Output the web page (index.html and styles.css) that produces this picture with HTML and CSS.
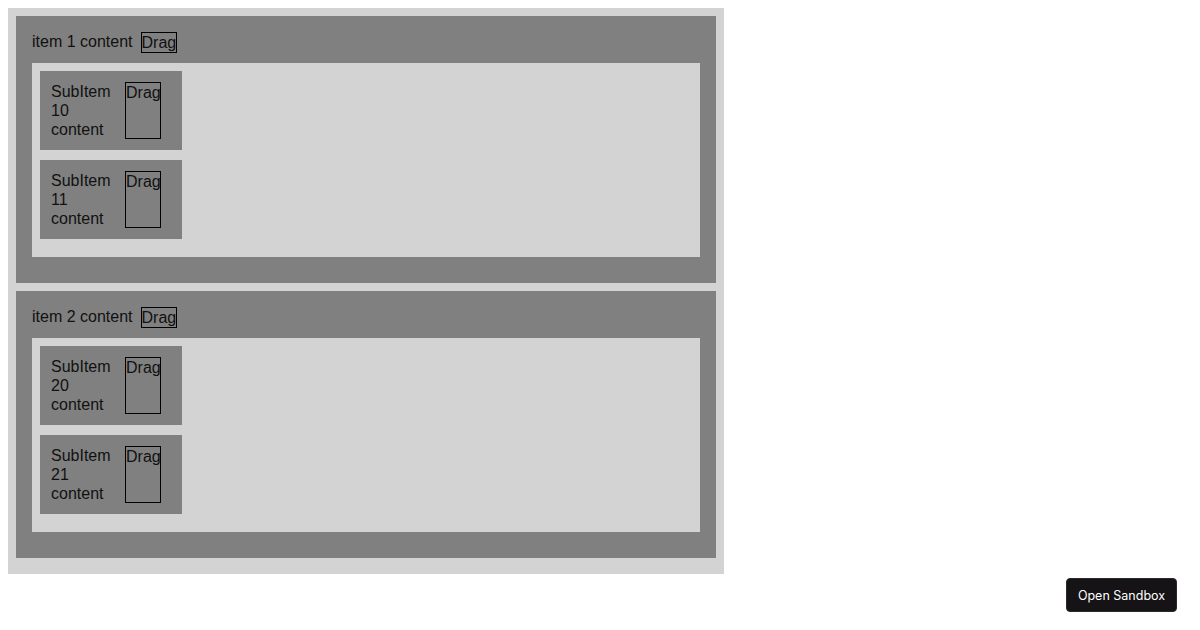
FILE: index.html
```html
<!DOCTYPE html>
<html>
<head>
<meta charset="utf-8">
<link rel="stylesheet" href="styles.css">
</head>
<body>
<div class="list">
  <div class="item">
    <div class="item-head"><span class="item-label">item 1 content</span><span class="handle">Drag</span></div>
    <div class="sublist">
      <div class="subitem"><div class="sub-text">SubItem 10 content</div><div class="handle sub-handle">Drag</div></div>
      <div class="subitem"><div class="sub-text">SubItem 11 content</div><div class="handle sub-handle">Drag</div></div>
    </div>
  </div>
  <div class="item">
    <div class="item-head"><span class="item-label">item 2 content</span><span class="handle">Drag</span></div>
    <div class="sublist">
      <div class="subitem"><div class="sub-text">SubItem 20 content</div><div class="handle sub-handle">Drag</div></div>
      <div class="subitem"><div class="sub-text">SubItem 21 content</div><div class="handle sub-handle">Drag</div></div>
    </div>
  </div>
</div>
<a class="sandbox-btn">Open Sandbox</a>
</body>
</html>
```
FILE: styles.css
```css
body {
  margin: 8px;
  font-family: "Liberation Sans", Arial, sans-serif;
  font-size: 16px;
  line-height: 19px;
  color: #111;
  background: #fff;
}
.list {
  width: 716px;
  box-sizing: border-box;
  background: #d3d3d3;
  padding: 8px;
  display: flow-root;
}
.item {
  background: #808080;
  padding: 16px;
  margin-bottom: 8px;
}
.item-head {
  display: flex;
  align-items: flex-start;
  margin-bottom: 10px;
}
.item-label {
  margin-right: 8px;
}
.handle {
  border: 1px solid #000;
  display: inline-block;
}
.sublist {
  background: #d3d3d3;
  padding: 8px;
  margin-bottom: 10px;
}
.subitem {
  background: #808080;
  width: 142px;
  box-sizing: border-box;
  padding: 11px;
  margin-bottom: 10px;
  display: flex;
  gap: 10px;
}
.sub-text {
  width: 64px;
}
.sub-handle {
  width: 34px;
  flex: none;
}
.sandbox-btn {
  position: fixed;
  right: 23px;
  bottom: 18px;
  width: 111px;
  height: 34px;
  box-sizing: border-box;
  background: #151315;
  color: #fff;
  border-radius: 4px;
  border: 1px solid #2a2a2a;
  font-family: Inter, "Liberation Sans", sans-serif;
  font-size: 12.5px;
  line-height: normal;
  display: flex;
  align-items: center;
  justify-content: center;
}
```
